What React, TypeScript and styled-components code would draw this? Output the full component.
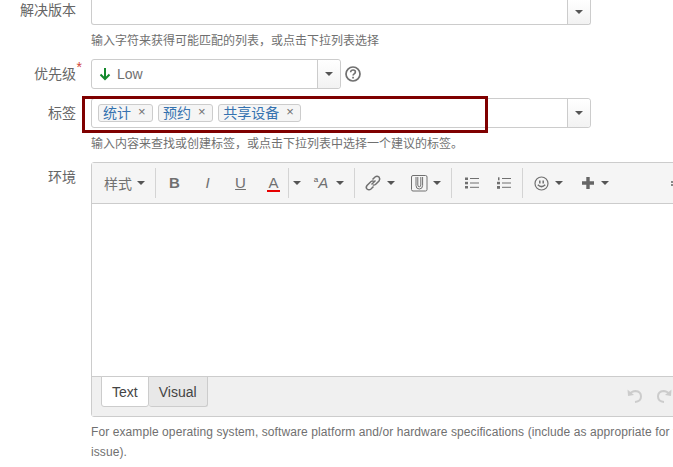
import React from "react";
import styled, { createGlobalStyle } from "styled-components";

const Global = createGlobalStyle`
  html, body { margin: 0; padding: 0; background: #fff; overflow: hidden; }
  body { font-family: "Liberation Sans", "Noto Sans CJK SC", sans-serif; }
`;
const Page = styled.div`
  position: relative;
  width: 673px;
  height: 467px;
  overflow: hidden;
  color: #333;
`;
const Row = styled.div<{ $mt?: number }>`
  display: grid;
  grid-template-columns: 76px 1fr;
  column-gap: 15px;
  margin-top: ${(p) => p.$mt ?? 0}px;
`;
const Label = styled.label<{ $lh?: number }>`
  font-size: 14px;
  line-height: ${(p) => p.$lh ?? 30}px;
  color: #666;
  text-align: right;
  position: relative;
  white-space: nowrap;
`;
const Star = styled.span`
  position: absolute;
  right: -6px;
  top: -2px;
  color: #d04437;
  font-size: 14px;
  line-height: 20px;
`;
const Content = styled.div`
  min-width: 0;
`;
const SelectBox = styled.div<{ $w: number; $h?: number; $noTop?: boolean }>`
  box-sizing: border-box;
  display: flex;
  width: ${(p) => p.$w}px;
  height: ${(p) => p.$h ?? 30}px;
  border: 1px solid #ccc;
  ${(p) => (p.$noTop ? "border-top: none; border-radius: 0 0 3px 3px;" : "border-radius: 3px;")}
  background: #fff;
`;
const FieldBody = styled.div`
  flex: 1;
  display: flex;
  align-items: center;
  min-width: 0;
`;
const DropButton = styled.div`
  width: 22px;
  border-left: 1px solid #ccc;
  background: linear-gradient(#fff, #f2f2f2);
  display: flex;
  align-items: center;
  justify-content: center;
  border-radius: 0 3px 3px 0;
`;
const Caret = styled.span<{ $ml?: number }>`
  display: inline-block;
  flex: none;
  width: 0;
  height: 0;
  margin-left: ${(p) => p.$ml ?? 0}px;
  border-left: 4px solid transparent;
  border-right: 4px solid transparent;
  border-top: 4px solid #555;
`;
const Help = styled.div`
  font-size: 12px;
  line-height: 16px;
  margin-top: 8px;
  color: #707070;
  white-space: nowrap;
`;
const PriorityRow = styled.div`
  display: flex;
  align-items: center;
  gap: 4px;
`;
const PriorityValue = styled.span`
  margin-left: 6px;
  font-size: 14px;
  color: #707070;
`;
const Arrow = styled.svg`
  margin-left: 7px;
  flex: none;
`;
const Tags = styled.div`
  display: flex;
  gap: 5.5px;
  padding-left: 6px;
`;
const Tag = styled.span`
  box-sizing: border-box;
  height: 18px;
  display: inline-flex;
  align-items: center;
  gap: 7px;
  padding: 0 6px 0 4px;
  border: 1px solid #ccc;
  border-radius: 3px;
  background: #f5f5f5;
  font-size: 14px;
  line-height: 16px;
  color: #3572b0;
`;
const TagX = styled.span`
  font-size: 13px;
  line-height: 14px;
  color: #707070;
  margin-top: -3px;
`;
const Highlight = styled.div`
  position: absolute;
  box-sizing: border-box;
  left: 82px;
  top: 96px;
  width: 406px;
  height: 37px;
  border: 3px solid #7f0000;
  pointer-events: none;
`;
const Editor = styled.div`
  box-sizing: border-box;
  width: 640px;
  border: 1px solid #ccc;
  border-radius: 3px;
`;
const Toolbar = styled.div`
  box-sizing: border-box;
  height: 41px;
  display: flex;
  align-items: center;
  background: #f5f5f5;
  border-bottom: 1px solid #ccc;
  color: #707070;
  padding-left: 12px;
`;
const ToolGroup = styled.div<{ $w: number; $pl?: number; $gap?: number }>`
  box-sizing: border-box;
  display: flex;
  align-items: center;
  width: ${(p) => p.$w}px;
  padding-left: ${(p) => p.$pl ?? 0}px;
  gap: ${(p) => p.$gap ?? 0}px;
  flex: none;
`;
const Sep = styled.span`
  flex: none;
  width: 1px;
  height: 30px;
  background: #d4d4d4;
`;
const Tool = styled.span<{ $w: number; $ml?: number; $weight?: number; $italic?: boolean; $under?: boolean }>`
  flex: none;
  width: ${(p) => p.$w}px;
  margin-left: ${(p) => p.$ml ?? 0}px;
  display: inline-flex;
  justify-content: center;
  align-items: center;
  font-family: "Liberation Sans", sans-serif;
  font-size: 15px;
  font-weight: ${(p) => p.$weight ?? 400};
  font-style: ${(p) => (p.$italic ? "italic" : "normal")};
  text-decoration: ${(p) => (p.$under ? "underline" : "none")};
  line-height: 18px;
  position: relative;
`;
const IconSlot = styled.span<{ $ml: number }>`
  display: flex;
  flex: none;
  margin-left: ${(p) => p.$ml}px;
`;
const StyleLabel = styled.span`
  font-size: 14px;
  color: #707070;
`;
const ColorA = styled.span`
  display: inline-block;
  font-size: 15px;
  line-height: 15px;
  border-bottom: 2px solid #e60000;
  padding: 0 1px;
`;
const SmallA = styled.span`
  font-size: 8px;
  line-height: 8px;
  align-self: flex-start;
  margin-top: 2px;
  color: #555;
`;
const ItalicA = styled.i`
  font-size: 15px;
`;
const Dots = styled.span`
  flex: none;
  margin-left: 48px;
  width: 2px;
  height: 5px;
  border-top: 2px solid #888;
  border-bottom: 2px solid #888;
  box-sizing: border-box;
`;
const EditArea = styled.div`
  height: 172px;
  background: #fff;
`;
const BottomBar = styled.div`
  box-sizing: border-box;
  height: 40px;
  background: #f0f0f0;
  border-top: 1px solid #ccc;
  display: flex;
  align-items: flex-start;
  padding-left: 9px;
  position: relative;
`;
const TabItem = styled.div<{ $active?: boolean }>`
  box-sizing: border-box;
  padding: 0 10px;
  font-size: 14px;
  line-height: 31px;
  color: #444;
  background: ${(p) => (p.$active ? "#fff" : "#e8e8e8")};
  border: 1px solid #ccc;
  border-top: ${(p) => (p.$active ? "1px solid #ccc" : "none")};
  border-left: ${(p) => (p.$active ? "1px solid #ccc" : "none")};
  border-radius: 0 0 3px 3px;
  margin-top: ${(p) => (p.$active ? -1 : 0)}px;
  height: ${(p) => (p.$active ? 31 : 30)}px;
`;
const History = styled.div`
  margin-left: auto;
  display: flex;
  gap: 13px;
  margin-top: 11px;
  margin-right: 57px;
`;
const Note = styled.div`
  width: 615px;
  margin-top: 5px;
  font-size: 12px;
  letter-spacing: 0.09px;
  line-height: 20px;
  color: #707070;
`;

const Link = () => (
  <svg width="20" height="18" viewBox="0 0 20 18" fill="none" stroke="#707070" strokeWidth="1.5">
    <path d="M8.5 10.5 L12.5 6.5" />
    <path d="M9.5 5.5 L12 3 Q14 1.5 16 3 Q17.5 5 16 7 L12.5 10.5 Q11 11.5 10 10.8" />
    <path d="M11 7.5 Q9.5 6.5 8 7.5 L4 11.5 Q2.5 13.5 4 15 Q6 16.5 8 15 L10.5 12.5" />
  </svg>
);
const Attach = () => (
  <svg width="17" height="17" viewBox="0 0 17 17" fill="none" stroke="#707070" strokeWidth="1">
    <rect x="0.5" y="0.5" width="15.5" height="15.5" rx="1.5" />
    <path d="M5 2v8.5q0 3.500 3.300 3.500t3.300-3.500V2M6.800 2v8q0 1.800 1.500 1.800T9.800 10V2" />
  </svg>
);
const Bullets = () => (
  <svg width="14" height="12" viewBox="0 0 14 12" fill="#707070">
    <rect x="0" y="0.500" width="3" height="2.500" />
    <rect x="0" y="4.800" width="3" height="2.500" />
    <rect x="0" y="9" width="3" height="2.500" />
    <rect x="5" y="1" width="9" height="1" />
    <rect x="5" y="5.500" width="9" height="1" />
    <rect x="5" y="9.800" width="9" height="1" />
  </svg>
);
const Numbers = () => (
  <svg width="14" height="12" viewBox="0 0 14 12" fill="#707070">
    <rect x="1" y="0.300" width="1.500" height="3" />
    <rect x="0" y="4.800" width="3" height="2.500" />
    <rect x="0" y="9" width="3" height="2.800" />
    <rect x="5" y="1" width="9" height="1" />
    <rect x="5" y="5.500" width="9" height="1" />
    <rect x="5" y="9.800" width="9" height="1" />
  </svg>
);
const Smile = () => (
  <svg width="15" height="15" viewBox="0 0 15 15" fill="none" stroke="#707070" strokeWidth="1.200">
    <circle cx="7.500" cy="7.500" r="6.500" />
    <path d="M5.800 4.500v3M9.200 4.500v3" strokeWidth="1.500" />
    <path d="M3.800 8.800q3.700 3.600 7.400 0" strokeWidth="1.500" />
  </svg>
);
const Plus = () => (
  <svg width="12" height="12" viewBox="0 0 12 12" fill="#666">
    <path d="M4.300 0h3.400v4.300H12v3.400H7.700V12H4.300V7.700H0V4.300h4.300z" />
  </svg>
);
const UndoIcon = styled.svg<{ $flip?: boolean }>`
  transform: ${(p) => (p.$flip ? "scaleX(-1)" : "none")};
`;
const Undo = ({ flip }: { flip?: boolean }) => (
  <UndoIcon $flip={flip} width="17" height="16" viewBox="0 0 17 16" fill="none" stroke="#ccc" strokeWidth="2">
    <path d="M3 6.500 Q6 3 9.500 3 Q15 3.500 15 8.500 Q15 13.500 9 14" />
    <path d="M1.500 1.500 L2 8 L8 7" fill="#ccc" stroke="none" />
  </UndoIcon>
);

export default function App() {
  return (
    <Page>
      <Global />
      <Row>
        <Label $lh={20}>解决版本</Label>
        <Content>
          <SelectBox $w={500} $h={25} $noTop>
            <FieldBody />
            <DropButton><Caret /></DropButton>
          </SelectBox>
          <Help>输入字符来获得可能匹配的列表，或点击下拉列表选择</Help>
        </Content>
      </Row>
      <Row $mt={10}>
        <Label>优先级<Star>*</Star></Label>
        <PriorityRow>
          <SelectBox $w={250}>
            <FieldBody>
              <Arrow width="12" height="14" viewBox="0 0 12 14" fill="none" stroke="#14892c" strokeWidth="2">
                <path d="M6 1v11M1.500 7.500 6 12l4.500-4.500" />
              </Arrow>
              <PriorityValue>Low</PriorityValue>
            </FieldBody>
            <DropButton><Caret /></DropButton>
          </SelectBox>
          <svg width="16" height="16" viewBox="0 0 16 16" fill="none">
            <circle cx="8" cy="8" r="7" stroke="#707070" strokeWidth="1.700" />
            <path d="M5.600 6.200q.2-2.200 2.500-2.200 2.300 0 2.300 2 0 1.100-1.200 1.800-1.100.7-1.100 1.700" stroke="#707070" strokeWidth="1.600" />
            <rect x="7.200" y="10.800" width="1.700" height="1.700" fill="#707070" />
          </svg>
        </PriorityRow>
      </Row>
      <Row $mt={9}>
        <Label>标签</Label>
        <Content>
          <SelectBox $w={500}>
            <FieldBody>
              <Tags>
                <Tag>统计<TagX>×</TagX></Tag>
                <Tag>预约<TagX>×</TagX></Tag>
                <Tag>共享设备<TagX>×</TagX></Tag>
              </Tags>
            </FieldBody>
            <DropButton><Caret /></DropButton>
          </SelectBox>
          <Help>输入内容来查找或创建标签，或点击下拉列表中选择一个建议的标签。</Help>
        </Content>
      </Row>
      <Row $mt={10}>
        <Label>环境</Label>
        <Content>
          <Editor>
            <Toolbar>
              <ToolGroup $w={51}>
                <StyleLabel>样式</StyleLabel><Caret $ml={5} />
              </ToolGroup>
              <Sep />
              <ToolGroup $w={132} $pl={2}>
                <Tool $w={33} $weight={700}>B</Tool>
                <Tool $w={33} $italic>I</Tool>
                <Tool $w={33} $under>U</Tool>
                <Tool $w={33}><ColorA>A</ColorA></Tool>
              </ToolGroup>
              <Sep />
              <ToolGroup $w={65} $pl={4}>
                <Caret />
                <Tool $w={28} $ml={6}><SmallA>a</SmallA><ItalicA>A</ItalicA></Tool>
                <Caret $ml={1} />
              </ToolGroup>
              <Sep />
              <ToolGroup $w={96} $pl={8}>
                <Link /><Caret $ml={4} />
                <IconSlot $ml={16}><Attach /></IconSlot><Caret $ml={5} />
              </ToolGroup>
              <Sep />
              <ToolGroup $w={70} $pl={13} $gap={18}>
                <Bullets /><Numbers />
              </ToolGroup>
              <Sep />
              <ToolGroup $w={100} $pl={11}>
                <Smile /><Caret $ml={6} />
                <IconSlot $ml={19}><Plus /></IconSlot><Caret $ml={7} />
              </ToolGroup>
              <Dots />
            </Toolbar>
            <EditArea />
            <BottomBar>
              <TabItem $active>Text</TabItem>
              <TabItem>Visual</TabItem>
              <History><Undo /><Undo flip /></History>
            </BottomBar>
          </Editor>
          <Note>For example operating system, software platform and/or hardware specifications (include as appropriate for the issue).</Note>
        </Content>
      </Row>
      <Highlight />
    </Page>
  );
}
